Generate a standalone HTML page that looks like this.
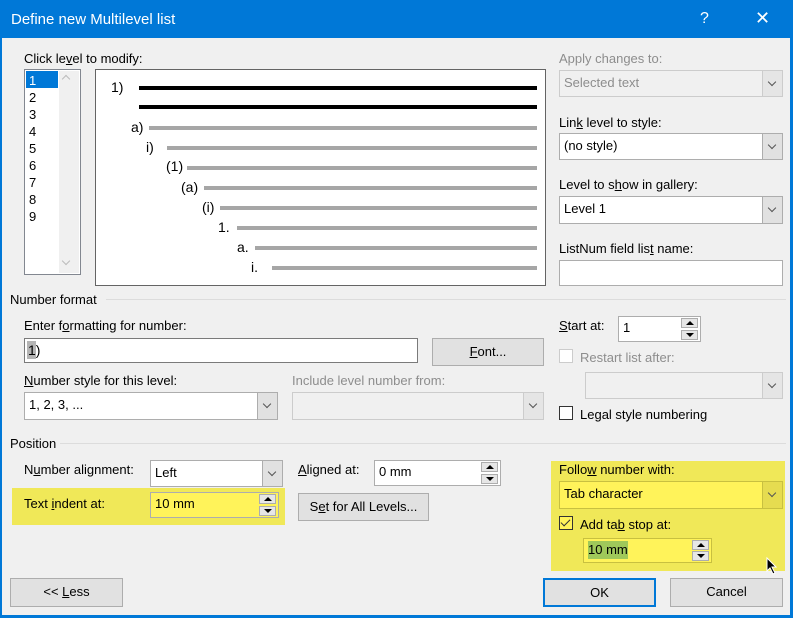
<!DOCTYPE html>
<html><head><style>
*{box-sizing:border-box;margin:0;padding:0}
body{width:793px;height:618px;overflow:hidden;background:#f0f0f0;font-family:"Liberation Sans",sans-serif;font-size:13px;color:#000;position:relative}
.a{position:absolute;white-space:nowrap}
.t{position:absolute;white-space:nowrap;line-height:15px}
.g{color:#8d8d8d}
u{text-decoration:underline}
.box{position:absolute;background:#fff;border:1px solid #7a7a7a}
.cb{position:absolute;background:#fff;border:1px solid #adadad;line-height:24px;padding-left:4px}
.cb .ar{position:absolute;right:0;top:0;bottom:0;width:20px;background:#e1e1e1;border-left:1px solid #adadad}
.cb .ar:after{content:"";position:absolute;left:6px;top:8px;width:5px;height:5px;border-right:1px solid #555;border-bottom:1px solid #555;transform:rotate(45deg)}
.dis{background:#f0f0f0;color:#8d8d8d;border-color:#cccccc}
.dis .ar{background:#e5e5e5;border-color:#ccc}
.btn{position:absolute;background:#e1e1e1;border:1px solid #adadad;text-align:center;line-height:26px}
.sp{position:absolute;background:#fff;border:1px solid #adadad;line-height:22px;padding-left:4px}
.sp .u,.sp .d{position:absolute;right:2px;width:17px;height:10px;background:#e6e6e6;border:1px solid #adadad}
.sp .u{top:1px}.sp .d{bottom:1px}
.sp .u:after{content:"";position:absolute;left:4px;top:2px;border-left:4px solid transparent;border-right:4px solid transparent;border-bottom:4px solid #000}
.sp .d:after{content:"";position:absolute;left:4px;top:2px;border-left:4px solid transparent;border-right:4px solid transparent;border-top:4px solid #000}
.chk{position:absolute;width:14px;height:14px;background:#fff;border:1px solid #333}
.ln{position:absolute;height:4px;background:#a6a6a6}
.pv{position:absolute;font-size:14px;line-height:14px}
.sep{position:absolute;height:1px;background:#dcdcdc}
</style></head><body>
<div class="a" style="left:0;top:0;width:793px;height:38px;background:#0078d7"></div>
<div class="a" style="left:11px;top:11px;color:#fff;font-size:15px">Define new Multilevel list</div>
<div class="a" style="left:700px;top:10px;color:#fff;font-size:16px">?</div>
<div class="a" style="left:755px;top:8px;color:#fff;font-size:18px">✕</div>
<div class="a" style="left:0;top:38px;width:2px;height:580px;background:#0078d7"></div>
<div class="a" style="left:790px;top:38px;width:3px;height:580px;background:#0078d7"></div>
<div class="a" style="left:0;top:615px;width:793px;height:3px;background:#0078d7"></div>

<div class="t" style="left:24px;top:51px">Click le<u>v</u>el to modify:</div>
<div class="box" style="left:24px;top:69px;width:57px;height:206px;border-color:#828790"></div>
<div class="a" style="left:26px;top:71px;width:32px;height:17px;background:#0078d7"></div>
<div class="a" style="left:59px;top:71px;width:20px;height:202px;background:#f0f0f0"></div>
<div class="a" style="left:63px;top:76px;width:6px;height:6px;border-left:1px solid #bbb;border-top:1px solid #bbb;transform:rotate(45deg)"></div>
<div class="a" style="left:63px;top:258px;width:6px;height:6px;border-right:1px solid #bbb;border-bottom:1px solid #bbb;transform:rotate(45deg)"></div>
<div class="t" style="left:29px;top:73px;color:#fff">1</div>
<div class="t" style="left:29px;top:90px">2</div>
<div class="t" style="left:29px;top:107px">3</div>
<div class="t" style="left:29px;top:124px">4</div>
<div class="t" style="left:29px;top:141px">5</div>
<div class="t" style="left:29px;top:158px">6</div>
<div class="t" style="left:29px;top:175px">7</div>
<div class="t" style="left:29px;top:192px">8</div>
<div class="t" style="left:29px;top:209px">9</div>

<div class="box" style="left:95px;top:69px;width:451px;height:217px;border-color:#646464"></div>
<div class="pv" style="left:111px;top:80px">1)</div>
<div class="a" style="left:139px;top:86px;width:398px;height:4px;background:#000"></div>
<div class="a" style="left:139px;top:105px;width:398px;height:4px;background:#000"></div>
<div class="pv" style="left:131px;top:120px">a)</div><div class="ln" style="left:149px;top:126px;width:388px"></div>
<div class="pv" style="left:146px;top:140px">i)</div><div class="ln" style="left:167px;top:146px;width:370px"></div>
<div class="pv" style="left:166px;top:159px">(1)</div><div class="ln" style="left:187px;top:166px;width:350px"></div>
<div class="pv" style="left:181px;top:180px">(a)</div><div class="ln" style="left:204px;top:186px;width:333px"></div>
<div class="pv" style="left:202px;top:200px">(i)</div><div class="ln" style="left:220px;top:206px;width:317px"></div>
<div class="pv" style="left:218px;top:220px">1.</div><div class="ln" style="left:237px;top:226px;width:300px"></div>
<div class="pv" style="left:237px;top:240px">a.</div><div class="ln" style="left:255px;top:246px;width:282px"></div>
<div class="pv" style="left:251px;top:260px">i.</div><div class="ln" style="left:272px;top:266px;width:265px"></div>

<div class="t g" style="left:559px;top:51px">Apply changes to:</div>
<div class="cb dis" style="left:559px;top:70px;width:224px;height:27px">Selected text<div class="ar"></div></div>
<div class="t" style="left:559px;top:115px">Lin<u>k</u> level to style:</div>
<div class="cb" style="left:559px;top:133px;width:224px;height:27px">(no style)<div class="ar"></div></div>
<div class="t" style="left:559px;top:177px">Level to s<u>h</u>ow in gallery:</div>
<div class="cb" style="left:559px;top:196px;width:224px;height:28px">Level 1<div class="ar"></div></div>
<div class="t" style="left:559px;top:241px">ListNum field lis<u>t</u> name:</div>
<div class="box" style="left:559px;top:260px;width:224px;height:26px;border-color:#adadad"></div>

<div class="t" style="left:10px;top:292px">Number format</div>
<div class="sep" style="left:106px;top:299px;width:680px"></div>
<div class="t" style="left:24px;top:318px">Enter f<u>o</u>rmatting for number:</div>
<div class="box" style="left:24px;top:338px;width:394px;height:25px;border-color:#7a7a7a"></div>
<div class="a" style="left:27px;top:341px;width:9px;height:18px;background:#b4b4b4"></div>
<div class="a" style="left:28px;top:341px;font-size:14px;line-height:18px">1)</div>
<div class="btn" style="left:432px;top:338px;width:112px;height:28px"><u>F</u>ont...</div>
<div class="t" style="left:559px;top:318px"><u>S</u>tart at:</div>
<div class="sp" style="left:618px;top:316px;width:83px;height:26px">1<div class="u"></div><div class="d"></div></div>
<div class="chk" style="left:559px;top:349px;border-color:#ccc"></div>
<div class="t g" style="left:580px;top:350px">Restart list after:</div>
<div class="cb dis" style="left:585px;top:372px;width:198px;height:27px"><div class="ar"></div></div>
<div class="t" style="left:24px;top:373px"><u>N</u>umber style for this level:</div>
<div class="cb" style="left:24px;top:392px;width:254px;height:28px">1, 2, 3, ...<div class="ar"></div></div>
<div class="t g" style="left:292px;top:373px">Include level number from:</div>
<div class="cb dis" style="left:292px;top:392px;width:252px;height:28px"><div class="ar"></div></div>
<div class="chk" style="left:559px;top:406px"></div>
<div class="t" style="left:580px;top:407px">Le<u>g</u>al style numbering</div>

<div class="t" style="left:10px;top:436px">Position</div>
<div class="sep" style="left:60px;top:443px;width:726px"></div>
<div class="t" style="left:24px;top:462px">N<u>u</u>mber alignment:</div>
<div class="cb" style="left:150px;top:460px;width:133px;height:27px">Left<div class="ar"></div></div>
<div class="t" style="left:298px;top:462px"><u>A</u>ligned at:</div>
<div class="sp" style="left:374px;top:460px;width:127px;height:26px">0 mm<div class="u"></div><div class="d"></div></div>
<div class="a" style="left:12px;top:488px;width:273px;height:37px;background:#f0e858"></div>
<div class="t" style="left:24px;top:496px">Text <u>i</u>ndent at:</div>
<div class="sp" style="left:150px;top:492px;width:129px;height:26px;background:#fff35a">10 mm<div class="u"></div><div class="d"></div></div>
<div class="btn" style="left:298px;top:493px;width:131px;height:28px">S<u>e</u>t for All Levels...</div>

<div class="a" style="left:551px;top:461px;width:234px;height:110px;background:#f0e858"></div>
<div class="t" style="left:559px;top:462px">Follo<u>w</u> number with:</div>
<div class="cb" style="left:559px;top:481px;width:224px;height:28px;background:#fff35a;border-color:#c8c040">Tab character<div class="ar" style="background:#e6dc50;border-color:#c8c040"></div></div>
<div class="chk" style="left:559px;top:516px;border-color:#333;background:#fff35a"></div>
<div class="a" style="left:563px;top:517px;width:5px;height:9px;border-right:1px solid #333;border-bottom:1px solid #333;transform:rotate(45deg)"></div>
<div class="t" style="left:580px;top:517px">Add ta<u>b</u> stop at:</div>
<div class="sp" style="left:583px;top:538px;width:129px;height:25px;background:#fff35a;border-color:#c8c040"><span style="background:#9fc85a;display:inline-block;line-height:18px;margin-top:2px">10 mm</span><div class="u"></div><div class="d"></div></div>
<svg class="a" style="left:766px;top:557px" width="12" height="18" viewBox="0 0 12 18"><path d="M1 1 L1 14 L4 11 L7 17 L9 16 L6 10 L10 10 Z" fill="#000" stroke="#fff" stroke-width="1"/></svg>

<div class="btn" style="left:10px;top:578px;width:113px;height:29px">&lt;&lt; <u>L</u>ess</div>
<div class="btn" style="left:543px;top:578px;width:113px;height:29px;border:2px solid #0078d7;line-height:25px">OK</div>
<div class="btn" style="left:670px;top:578px;width:113px;height:29px">Cancel</div>
</body></html>
